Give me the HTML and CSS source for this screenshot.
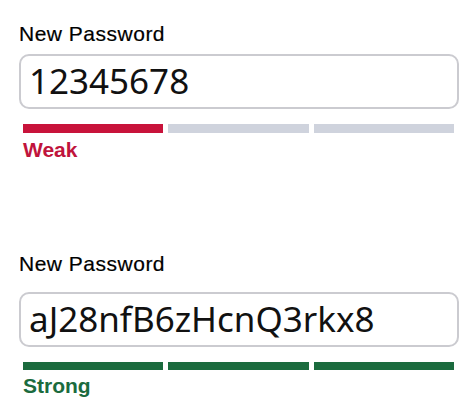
FILE: index.html
```html
<!DOCTYPE html>
<html lang="en">
<head>
<meta charset="utf-8">
<title>Password strength</title>
<link rel="stylesheet" href="styles.css">
</head>
<body>
<div class="page">
  <section class="field">
    <label class="field-label" for="pw1">New Password</label>
    <input class="field-input" id="pw1" type="text" value="12345678">
    <div class="meter">
      <span class="meter-seg weak"></span>
      <span class="meter-seg"></span>
      <span class="meter-seg"></span>
    </div>
    <div class="meter-text weak-text">Weak</div>
  </section>
  <section class="field field-second">
    <label class="field-label" for="pw2">New Password</label>
    <input class="field-input input-spaced" id="pw2" type="text" value="aJ28nfB6zHcnQ3rkx8">
    <div class="meter meter-tight">
      <span class="meter-seg strong"></span>
      <span class="meter-seg strong"></span>
      <span class="meter-seg strong"></span>
    </div>
    <div class="meter-text strong-text">Strong</div>
  </section>
</div>
</body>
</html>
```
FILE: styles.css
```css
* { box-sizing: border-box; }
html, body { margin: 0; padding: 0; background: #fff; }
.page {
  padding: 22px 15px 0 19px;
  font-family: "Liberation Sans", Arial, sans-serif;
  color: #000;
}
.field { display: flex; flex-direction: column; }
.field-second { margin-top: 90px; }
.field-label {
  font-size: 21px;
  line-height: 24px;
  letter-spacing: 0.5px;
  color: #000;
  -webkit-text-stroke: 0.2px #000;
}
.field-input {
  margin-top: 8px;
  width: 440px;
  height: 55px;
  border: 2px solid #cbcbd0;
  border-radius: 10px;
  padding: 0 8px 3px 8px;
  font-family: "Noto Sans", "Open Sans", sans-serif;
  font-size: 35px;
  color: #111;
  background: #fff;
  outline: none;
}
.input-spaced { margin-top: 16px; }
.meter {
  display: flex;
  gap: 5px;
  margin: 15px 5px 0 4px;
  height: 9px;
}
.meter-tight { height: 8px; }
.meter-seg { flex: 1; background: #cfd3dd; }
.meter-seg.weak { background: #c8133b; }
.meter-seg.strong { background: #1b6b3e; }
.meter-text {
  margin-top: 5px;
  margin-left: 4px;
  font-size: 21px;
  line-height: 24px;
  font-weight: bold;
}
.weak-text { color: #c0143c; }
.strong-text { color: #1b6b3e; margin-top: 4px; }
```
